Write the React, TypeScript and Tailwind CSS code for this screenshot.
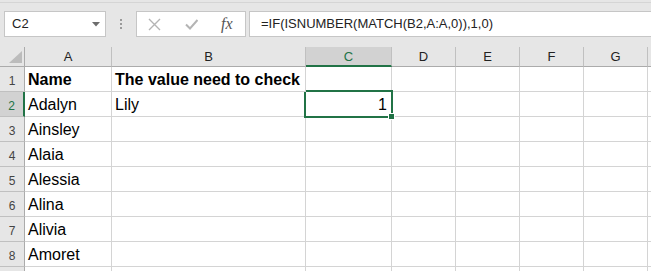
const cols = ["A", "B", "C", "D", "E", "F", "G"];

const names = ["Adalyn", "Ainsley", "Alaia", "Alessia", "Alina", "Alivia", "Amoret"];

function Toolbar() {
  return (
    <div className="h-[47px] bg-[#e6e6e6] pt-[2px]">
      <div className="flex h-full items-start border-t border-[#d5d5d5] pt-[8px]">
        <div className="ml-[4px] flex h-[26px] w-[102px] items-center justify-between border border-[#c6c6c6] bg-white pl-[7px] pr-[5px]">
          <span className="text-[13px] text-[#222]">C2</span>
          <svg width="8" height="5" viewBox="0 0 8 5">
            <polygon points="0,0 8,0 4,4.5" fill="#6d6d6d" />
          </svg>
        </div>
        <div className="flex h-[26px] w-[30px] flex-col items-center justify-center gap-[2px]">
          <span className="h-[2px] w-[2px] bg-[#9a9a9a]" />
          <span className="h-[2px] w-[2px] bg-[#9a9a9a]" />
          <span className="h-[2px] w-[2px] bg-[#9a9a9a]" />
        </div>
        <div className="flex h-[26px] w-[110px] items-center border border-[#c6c6c6] bg-white">
          <svg className="ml-[11px]" width="13" height="13" viewBox="0 0 13 13">
            <path d="M1 1 L12 12 M12 1 L1 12" stroke="#b4b4b4" strokeWidth="1.4" />
          </svg>
          <svg className="ml-[24px]" width="13" height="11" viewBox="0 0 13 11">
            <path d="M1 5.5 L5 9.5 L12.5 1" stroke="#b4b4b4" strokeWidth="2" fill="none" />
          </svg>
          <span className="ml-[23px] font-['Liberation_Serif',serif] text-[16px] italic leading-none text-[#555]">
            fx
          </span>
        </div>
        <div className="ml-[3px] flex h-[26px] flex-1 items-center border border-r-0 border-[#c6c6c6] bg-white pl-[11px]">
          <span className="text-[13px] text-[#222]">=IF(ISNUMBER(MATCH(B2,A:A,0)),1,0)</span>
        </div>
      </div>
    </div>
  );
}

function HeaderRow() {
  return (
    <>
      <div className="relative h-[20px] border-r border-b border-r-[#ababab] border-b-[#ababab] bg-[#e6e6e6]">
        <svg className="absolute left-[9px] top-[4px]" width="14" height="13" viewBox="0 0 14 13">
          <polygon points="13,0 13,12 0,12" fill="#bcbcbc" />
        </svg>
      </div>
      {cols.map((c) =>
        c === "C" ? (
          <div
            key={c}
            className="flex h-[20px] items-center justify-center border-r border-b-2 border-r-[#c0c0c0] border-b-[#217346] bg-[#d2d2d2] pt-[1px] text-[13px] text-[#217346]"
          >
            {c}
          </div>
        ) : (
          <div
            key={c}
            className="flex h-[20px] items-center justify-center border-r border-b border-r-[#c0c0c0] border-b-[#ababab] bg-[#e6e6e6] text-[13px] text-[#222]"
          >
            {c}
          </div>
        )
      )}
      <div className="h-[20px] border-b border-[#ababab] bg-[#e6e6e6]" />
    </>
  );
}

function Cell({ children, bold, right }: { children?: React.ReactNode; bold?: boolean; right?: boolean }) {
  return (
    <div
      className={`flex h-[25px] items-end overflow-visible whitespace-nowrap border-r border-b border-[#d4d4d4] bg-white px-[3px] pb-[2px] text-[16px] leading-[18px] text-black ${
        bold ? "font-bold" : ""
      } ${right ? "justify-end" : ""}`}
    >
      {children}
    </div>
  );
}

function RowHead({ n, active }: { n?: number; active?: boolean }) {
  return active ? (
    <div className="flex h-[25px] items-center justify-center border-r-2 border-b border-r-[#217346] border-b-[#c0c0c0] bg-[#d2d2d2] pt-[3px] text-[12px] text-[#217346]">
      {n}
    </div>
  ) : (
    <div className="flex h-[25px] items-center justify-center border-r border-b border-r-[#ababab] border-b-[#c0c0c0] bg-[#e6e6e6] pt-[3px] text-[12px] text-[#444]">
      {n}
    </div>
  );
}

export default function App() {
  return (
    <div className="h-[271px] w-[651px] overflow-hidden bg-white font-['Liberation_Sans',Arial,sans-serif]">
      <Toolbar />
      <div className="grid grid-cols-[25px_87px_194px_86px_64px_64px_64px_64px_1fr]">
        <HeaderRow />

        <RowHead n={1} />
        <Cell bold>Name</Cell>
        <div className="relative z-10 flex h-[25px] items-end whitespace-nowrap border-r border-b border-[#d4d4d4] bg-white px-[3px] pb-[2px] text-[16px] font-bold leading-[18px] text-black">
          The value need to check
        </div>
        <Cell />
        <Cell />
        <Cell />
        <Cell />
        <Cell />
        <Cell />

        <RowHead n={2} active />
        <Cell>{names[0]}</Cell>
        <Cell>Lily</Cell>
        <div className="relative flex h-[25px] items-end justify-end border-r border-b border-[#d4d4d4] bg-white pb-[2px] pr-[4px] text-[16px] leading-[18px] text-black">
          1
          <div className="absolute -left-[2px] -top-[2px] h-[28px] w-[89px] border-2 border-[#217346]" />
          <div className="absolute -right-[4px] -bottom-[4px] z-10 h-[7px] w-[7px] border border-white bg-[#217346]" />
        </div>
        <Cell />
        <Cell />
        <Cell />
        <Cell />
        <Cell />

        {names.slice(1).map((name, i) => (
          <div key={name} className="contents">
            <RowHead n={i + 3} />
            <Cell>{name}</Cell>
            <Cell />
            <Cell />
            <Cell />
            <Cell />
            <Cell />
            <Cell />
            <Cell />
          </div>
        ))}

        {/* row 9 only shows its top edge */}
        <RowHead />
        <Cell />
        <Cell />
        <Cell />
        <Cell />
        <Cell />
        <Cell />
        <Cell />
        <Cell />
      </div>
    </div>
  );
}
